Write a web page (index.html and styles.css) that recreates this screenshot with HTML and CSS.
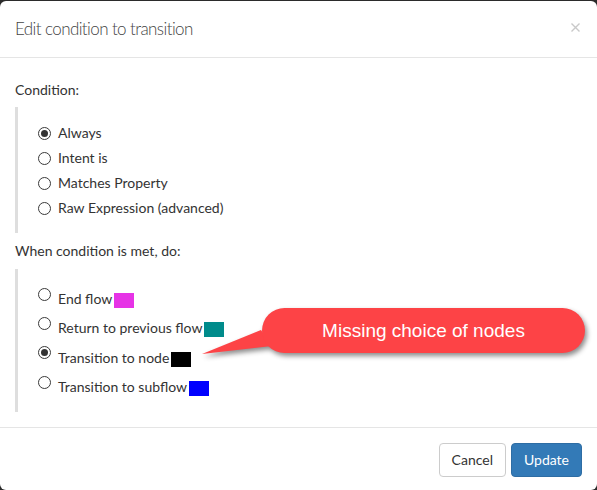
FILE: index.html
```html
<!DOCTYPE html>
<html>
<head>
<meta charset="utf-8">
<link rel="stylesheet" href="styles.css">
</head>
<body>
<div class="modal">
  <div class="modal-header">
    <h4 class="modal-title">Edit condition to transition</h4>
    <span class="close"><svg width="9" height="9" viewBox="0 0 9 9"><path d="M0.5 0.5 L8.5 8.5 M8.5 0.5 L0.5 8.5" stroke="#c9c9c9" stroke-width="1.4"/></svg></span>
  </div>
  <div class="modal-body">
    <div class="label">Condition:</div>
    <div class="group group-cond">
      <div class="row"><span class="radio checked"></span>Always</div>
      <div class="row"><span class="radio"></span>Intent is</div>
      <div class="row"><span class="radio"></span>Matches Property</div>
      <div class="row"><span class="radio"></span>Raw Expression (advanced)</div>
    </div>
    <div class="label label-2">When condition is met, do:</div>
    <div class="group group-do">
      <div class="row"><span class="radio up"></span>End flow<span class="swatch sw-magenta"></span></div>
      <div class="row"><span class="radio up"></span>Return to previous flow<span class="swatch sw-teal"></span></div>
      <div class="row"><span class="radio up checked"></span>Transition to node<span class="swatch sw-black"></span></div>
      <div class="row"><span class="radio up"></span>Transition to subflow<span class="swatch sw-blue"></span></div>
    </div>
  </div>
  <div class="modal-footer">
    <button class="btn btn-default">Cancel</button>
    <button class="btn btn-primary">Update</button>
  </div>
  <div class="callout">
    <svg class="callout-shape" width="390" height="58" viewBox="0 0 390 58">
      <path d="M2 49 L61 25 L72 41 Z" fill="#fd4346"/>
      <rect x="62" y="3" width="323" height="45" rx="22.5" ry="22.5" fill="#fd4346"/>
    </svg>
    <span class="callout-text">Missing choice of nodes</span>
  </div>
</div>
</body>
</html>
```

FILE: styles.css
```css
html, body {
  margin: 0;
  padding: 0;
  background: #2b2b2b;
  height: 490px;
  overflow: hidden;
}
.modal {
  position: relative;
  margin-top: 1px;
  width: 597px;
  height: 489px;
  background: #fff;
  border-radius: 6px;
  font-family: Lato, "Liberation Sans", sans-serif;
  font-size: 14px;
  line-height: 20px;
  color: #333;
  box-sizing: border-box;
}
.modal-header {
  display: flex;
  justify-content: space-between;
  align-items: flex-start;
  padding: 15px 15px 15px 15px;
  height: 26px;
  border-bottom: 1px solid #e5e5e5;
}
.modal-title {
  margin: 0;
  font-size: 17px;
  font-weight: 300;
  letter-spacing: -0.6px;
  line-height: 26px;
  color: #444;
}
.close {
  display: block;
  margin-top: 7px;
  margin-right: 2px;
  width: 9px;
  height: 9px;
}
.close svg { display: block; }
.modal-body {
  padding: 22px 15px 15px 15px;
}
.label {
  line-height: 20px;
  margin-bottom: 7px;
}
.label-2 {
  margin-top: 8px;
  margin-bottom: 8px;
}
.group {
  border-left: 3px solid #dedede;
  padding-left: 20px;
  display: flex;
  flex-direction: column;
}
.group-cond {
  padding-top: 16px;
  padding-bottom: 15px;
  gap: 5px;
}
.group-do {
  padding-top: 20px;
  padding-bottom: 15px;
  gap: 9.4px;
}
.row {
  display: flex;
  align-items: center;
  height: 20px;
  white-space: pre;
}
.radio {
  position: relative;
  flex: none;
  width: 13px;
  height: 13px;
  box-sizing: border-box;
  border: 1px solid #3a3a3a;
  border-radius: 50%;
  background: #fff;
  margin-right: 7px;
}
.radio.up {
  transform: translateY(-5px);
}
.radio.checked::after {
  content: "";
  position: absolute;
  left: 2px;
  top: 2px;
  width: 7px;
  height: 7px;
  border-radius: 50%;
  background: #333;
}
.swatch {
  display: inline-block;
  width: 20px;
  height: 15px;
  align-self: flex-end;
  margin-bottom: 1px;
  margin-left: 2px;
}
.sw-magenta { background: #e633e6; }
.sw-teal { background: #008b8b; }
.sw-black { background: #000; }
.sw-blue { background: #0000ff; }
.modal-footer {
  border-top: 1px solid #e5e5e5;
  padding: 15px;
  display: flex;
  justify-content: flex-end;
  gap: 5px;
}
.btn {
  font-family: Lato, "Liberation Sans", sans-serif;
  font-size: 14px;
  line-height: 20px;
  padding: 6px 12px;
  border-radius: 4px;
  border: 1px solid #ccc;
  background: #fff;
  color: #333;
  margin: 0;
}
.btn-primary {
  background: #337ab7;
  border-color: #2e6da4;
  color: #fff;
}
.callout {
  position: absolute;
  left: 200px;
  top: 304px;
  width: 390px;
  height: 58px;
}
.callout-shape {
  position: absolute;
  left: 0;
  top: 0;
  filter: drop-shadow(2px 3px 2.5px rgba(0, 0, 0, 0.45));
}
.callout-text {
  position: absolute;
  left: 62px;
  top: 3px;
  width: 323px;
  height: 45px;
  display: flex;
  align-items: center;
  justify-content: center;
  font-family: "Liberation Sans", Arial, sans-serif;
  font-size: 19px;
  color: #fff;
}
```
